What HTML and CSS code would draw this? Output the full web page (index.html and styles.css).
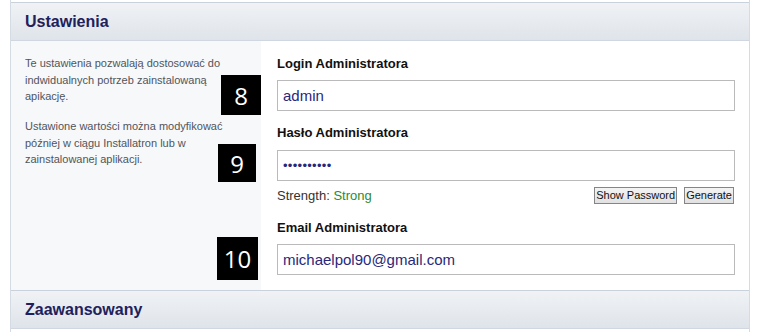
FILE: index.html
```html
<!DOCTYPE html>
<html lang="pl">
<head>
<meta charset="utf-8">
<title>Ustawienia</title>
<link rel="stylesheet" href="styles.css">
</head>
<body>
<div class="panel">
  <div class="section-head">Ustawienia</div>
  <div class="section-body">
    <div class="desc">
      <p>Te ustawienia pozwalają dostosować do indwidualnych potrzeb zainstalowaną apikację.</p>
      <p>Ustawione wartości można modyfikować później w ciągu Installatron lub w zainstalowanej aplikacji.</p>
    </div>
    <div class="fields">
      <label class="label">Login Administratora</label>
      <input class="input" type="text" value="admin" readonly>
      <label class="label label-gap">Hasło Administratora</label>
      <input class="input input-pass" type="text" value="••••••••••" readonly>
      <div class="strength-row">
        <span class="strength">Strength: <span class="strong">Strong</span></span>
        <span class="btns">
          <button class="btn" type="button">Show Password</button>
          <button class="btn" type="button">Generate</button>
        </span>
      </div>
      <label class="label label-gap2">Email Administratora</label>
      <input class="input" type="text" value="michaelpol90@gmail.com" readonly>
    </div>
    <span class="badge badge-8">8</span>
    <span class="badge badge-9">9</span>
    <span class="badge badge-10">10</span>
  </div>
  <div class="section-head">Zaawansowany</div>
</div>
</body>
</html>
```
FILE: styles.css
```css
* { box-sizing: border-box; }
html, body { margin: 0; padding: 0; background: #ffffff; }
body {
  font-family: "Liberation Sans", Arial, sans-serif;
  height: 332px;
  overflow: hidden;
}
.panel {
  margin-left: 10px;
  width: 740px;
  height: 332px;
  border-left: 1px solid #d5dbe3;
  border-right: 1px solid #d5dbe3;
  padding-top: 2px;
}
.section-head {
  height: 39px;
  border-top: 1px solid #c8d1dc;
  border-bottom: 1px solid #d0d7e0;
  background: linear-gradient(to bottom, #f0f2f5 0%, #dfe4ea 100%);
  color: #20215c;
  font-weight: bold;
  font-size: 16px;
  line-height: 37px;
  padding-left: 14px;
}
.section-body {
  position: relative;
  display: grid;
  grid-template-columns: 250px 1fr;
}
.desc {
  background: #f7f8fa;
  padding: 14px 30px 0 14px;
  font-size: 11px;
  line-height: 16.5px;
  color: #50555c;
}
.desc p { margin: 0 0 13.5px; }
.fields {
  background: #ffffff;
  display: flex;
  flex-direction: column;
  padding: 15px 14px 15px 16px;
}
.label {
  display: block;
  font-weight: bold;
  font-size: 13px;
  line-height: 16px;
  color: #111111;
  margin-bottom: 8px;
}
.label-gap { margin-top: 14px; margin-bottom: 9px; }
.label-gap2 { margin-top: 16px; }
.input {
  display: block;
  width: 100%;
  height: 31px;
  margin: 0;
  border: 1px solid #bababa;
  border-radius: 0;
  padding: 0 5px;
  font-family: "Liberation Sans", Arial, sans-serif;
  font-size: 15px;
  color: #28287a;
  background: #ffffff;
  outline: none;
}
.input-pass {
  font-size: 13px;
  letter-spacing: 0.3px;
}
.strength-row {
  display: flex;
  justify-content: space-between;
  align-items: center;
  margin-top: 6px;
  height: 17px;
}
.strength {
  font-size: 13px;
  color: #333333;
}
.strong { color: #2e8b2e; }
.btns { display: flex; gap: 7px; margin-right: 1px; }
.btn {
  height: 17px;
  margin: 0;
  padding: 0 1px;
  border: 1px solid #858585;
  border-radius: 0;
  background: linear-gradient(to bottom, #f4f4f4, #e1e1e1);
  font-family: "Liberation Sans", Arial, sans-serif;
  font-size: 11px;
  line-height: 15px;
  color: #111111;
}
.badge {
  position: absolute;
  background: #000000;
  color: #ffffff;
  font-family: "Open Sans", "Noto Sans", sans-serif;
  font-size: 24px;
  display: flex;
  align-items: center;
  justify-content: center;
}
.badge-8 { left: 210px; top: 34px; width: 40px; height: 40px; }
.badge-9 { left: 207px; top: 103px; width: 38px; height: 38px; }
.badge-10 { left: 206px; top: 196px; width: 41px; height: 43px; }
```
